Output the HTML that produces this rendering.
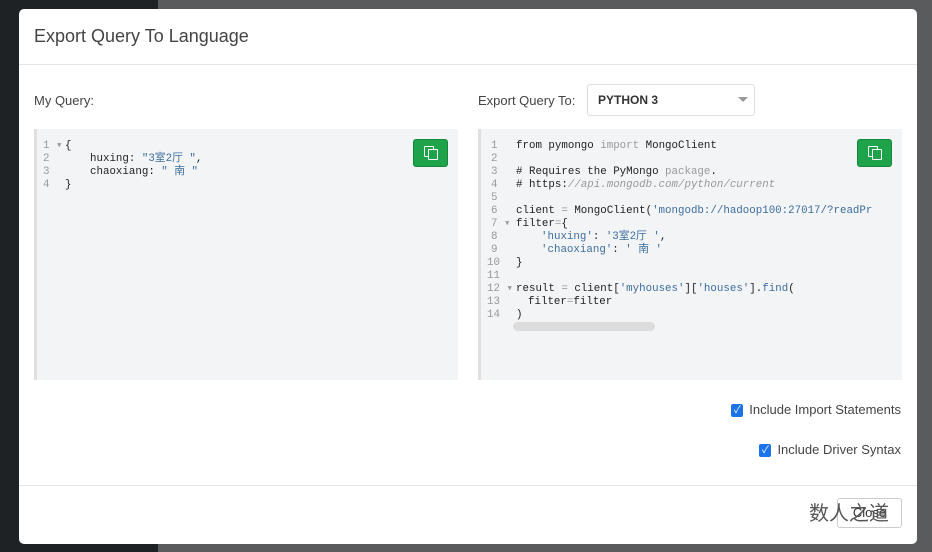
<!DOCTYPE html>
<html><head><meta charset="utf-8"><style>
body{margin:0;width:932px;height:552px;overflow:hidden;background:#5a5b5c;font-family:"Liberation Sans","Noto Sans CJK SC",sans-serif;position:relative}
.side{position:absolute;left:0;top:0;width:158px;height:552px;background:#1e2225}
.modal{position:absolute;left:19px;top:9px;width:898px;height:535px;background:#fff;border-radius:5px}
.hdr{position:absolute;left:0;top:0;width:898px;height:55px;border-bottom:1px solid #e5e5e5}
.hdr span{position:absolute;left:15px;top:17px;font-size:18px;color:#444}
.lbl{position:absolute;font-size:13px;color:#444}
.code{position:absolute;background:#f3f4f6;border-left:3px solid #e0e0e0;top:120px;height:251px;width:421px;font-family:"Liberation Mono","Noto Sans CJK SC",monospace;font-size:10.8px;color:#222}
.l{position:absolute;white-space:pre;height:13px;line-height:13px}
.s{color:#3d6e9e}.g{color:#999}.i{color:#999;font-style:italic}
.btn{position:absolute;width:33px;height:26px;background:#1ea34a;border:1px solid #14883a;border-radius:3px}
.sel{position:absolute;left:568px;top:75px;width:166px;height:30px;border:1px solid #ddd;border-radius:3px;background:#fff;font-size:12px;font-weight:bold;color:#333}
.cbrow{position:absolute;right:16px;font-size:13px;color:#444;white-space:nowrap;line-height:16px}
.cb{display:inline-block;width:12px;height:13px;background:#1a73e8;border-radius:2px;color:#fff;font-size:10px;text-align:center;line-height:13px;vertical-align:top;margin-top:2px;margin-right:6px}
</style></head><body>
<div class="side"></div>
<div class="modal">
<div class="hdr"><span>Export Query To Language</span></div>
<div class="lbl" style="left:15px;top:84px">My Query:</div>
<div class="lbl" style="left:459px;top:84px">Export Query To:</div>
<div class="sel"><span style="position:absolute;left:10px;top:8px">PYTHON 3</span><span style="position:absolute;right:6px;top:12px;border:5px solid transparent;border-top:5px solid #999;border-bottom:0"></span></div>
<div class="code" style="left:15px">
<div class="l g" style="left:6px;top:11px">1 ▾</div><div class="l" style="left:28px;top:11px">{</div>
<div class="l g" style="left:6px;top:24px">2</div><div class="l" style="left:53px;top:24px">huxing: <span class="s">"3室2厅 "</span>,</div>
<div class="l g" style="left:6px;top:37px">3</div><div class="l" style="left:53px;top:37px">chaoxiang: <span class="s">" 南 "</span></div>
<div class="l g" style="left:6px;top:50px">4</div><div class="l" style="left:28px;top:50px">}</div>
<div class="btn" style="left:376px;top:10px"><span style="position:absolute;left:10px;top:6px;width:8px;height:9px;border:1.5px solid #fff;border-radius:1px"></span><span style="position:absolute;left:14px;top:9px;width:8px;height:9px;border:1.5px solid #fff;background:#1ea34a;border-radius:1px"></span></div>
</div>
<div class="code" style="left:459px">
<div class="l g" style="left:10px;top:11px">1</div><div class="l" style="left:35px;top:11px">from pymongo <span class="g">import</span> MongoClient</div>
<div class="l g" style="left:10px;top:24px">2</div>
<div class="l g" style="left:10px;top:37px">3</div><div class="l" style="left:35px;top:37px"># Requires the PyMongo <span class="g">package</span>.</div>
<div class="l g" style="left:10px;top:50px">4</div><div class="l" style="left:35px;top:50px"># https:<span class="i">//api.mongodb.com/python/current</span></div>
<div class="l g" style="left:10px;top:63px">5</div>
<div class="l g" style="left:10px;top:76px">6</div><div class="l" style="left:35px;top:76px">client <span class="g">=</span> MongoClient(<span class="s">'mongodb://hadoop100:27017/?readPr</span></div>
<div class="l g" style="left:10px;top:89px">7 ▾</div><div class="l" style="left:35px;top:89px">filter<span class="g">=</span>{</div>
<div class="l g" style="left:10px;top:102px">8</div><div class="l" style="left:60px;top:102px"><span class="s">'huxing'</span>: <span class="s">'3室2厅 '</span>,</div>
<div class="l g" style="left:10px;top:115px">9</div><div class="l" style="left:60px;top:115px"><span class="s">'chaoxiang'</span>: <span class="s">' 南 '</span></div>
<div class="l g" style="left:6px;top:128px">10</div><div class="l" style="left:35px;top:128px">}</div>
<div class="l g" style="left:6px;top:141px">11</div>
<div class="l g" style="left:6px;top:154px">12 ▾</div><div class="l" style="left:35px;top:154px">result <span class="g">=</span> client[<span class="s">'myhouses'</span>][<span class="s">'houses'</span>].<span class="s">find</span>(</div>
<div class="l g" style="left:6px;top:167px">13</div><div class="l" style="left:47px;top:167px">filter<span class="g">=</span>filter</div>
<div class="l g" style="left:6px;top:180px">14</div><div class="l" style="left:35px;top:180px">)</div>
<div style="position:absolute;left:32px;top:193px;width:142px;height:9px;border-radius:5px;background:#dcdcdc"></div>
<div class="btn" style="left:376px;top:10px"><span style="position:absolute;left:10px;top:6px;width:8px;height:9px;border:1.5px solid #fff;border-radius:1px"></span><span style="position:absolute;left:14px;top:9px;width:8px;height:9px;border:1.5px solid #fff;background:#1ea34a;border-radius:1px"></span></div>
</div>
<div class="cbrow" style="top:393px"><span class="cb">✓</span>Include Import Statements</div>
<div class="cbrow" style="top:433px"><span class="cb">✓</span>Include Driver Syntax</div>
<div style="position:absolute;left:0;top:476px;width:898px;border-top:1px solid #e5e5e5"></div>
<div style="position:absolute;left:818px;top:489px;width:63px;height:28px;border:1px solid #ccc;border-radius:3px;font-size:13px;color:#333;text-align:center;line-height:28px">Close</div>
<div style="position:absolute;left:790px;top:488px;font-size:20px;color:#555">数人之道</div>
</div>
</body></html>
